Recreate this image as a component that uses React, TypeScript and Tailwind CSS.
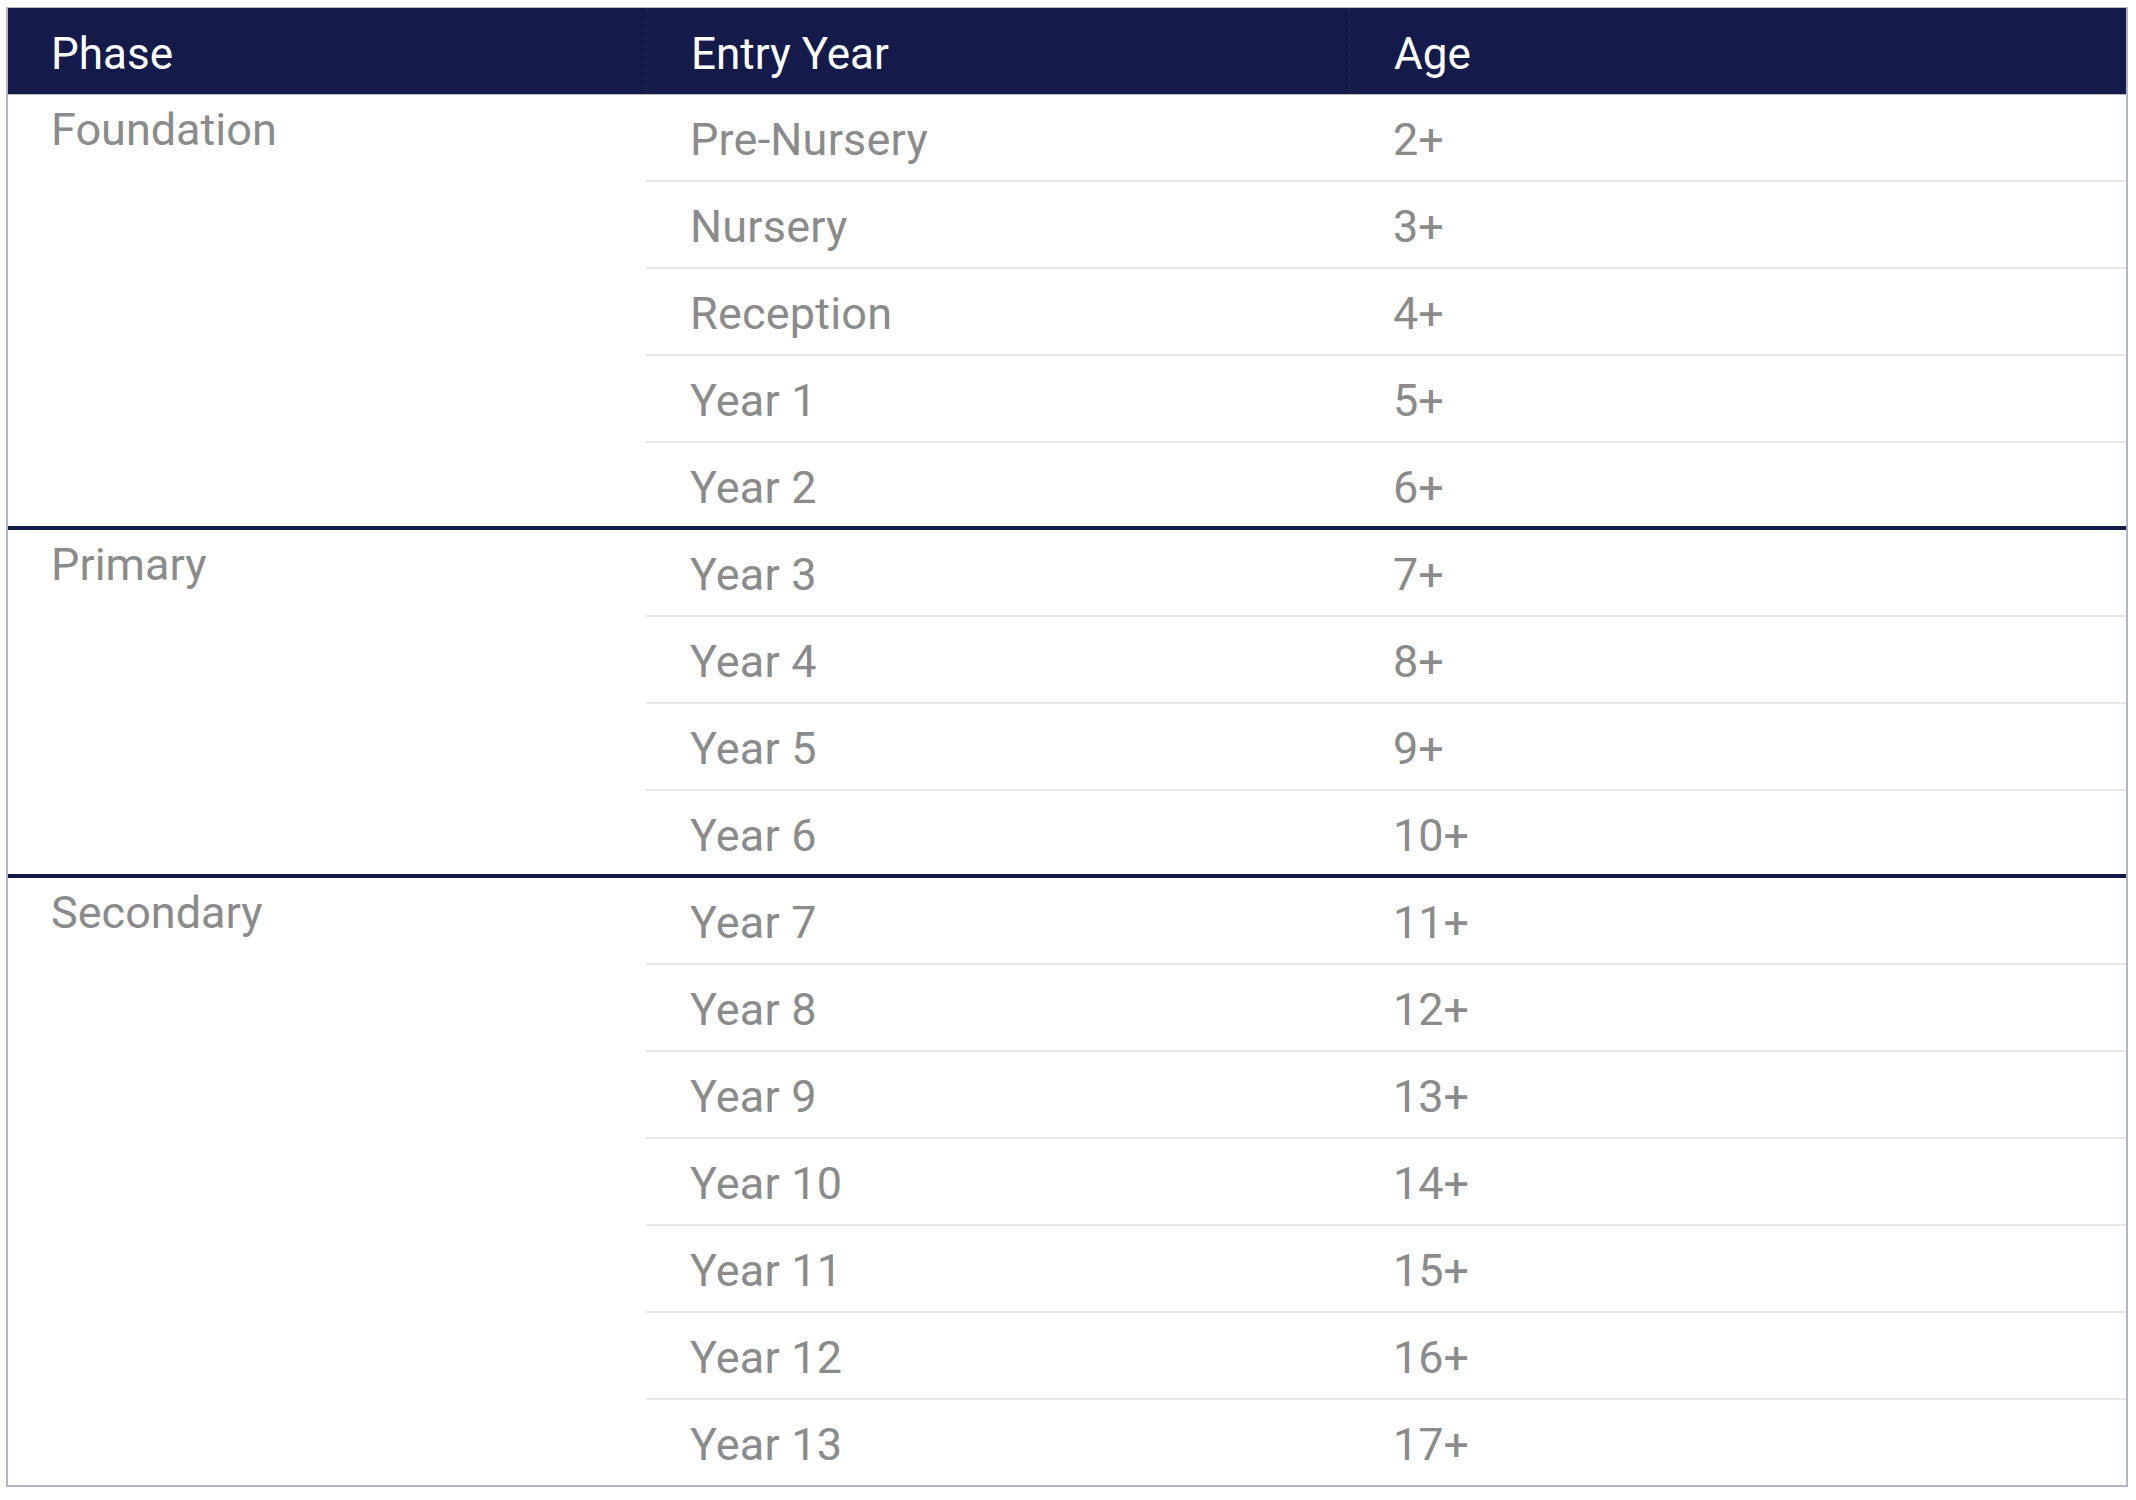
const GROUPS = [
    {
        phase: 'Foundation',
        rows: [
            ['Pre-Nursery', '2+'],
            ['Nursery', '3+'],
            ['Reception', '4+'],
            ['Year 1', '5+'],
            ['Year 2', '6+']
        ]
    },
    {
        phase: 'Primary',
        rows: [
            ['Year 3', '7+'],
            ['Year 4', '8+'],
            ['Year 5', '9+'],
            ['Year 6', '10+']
        ]
    },
    {
        phase: 'Secondary',
        rows: [
            ['Year 7', '11+'],
            ['Year 8', '12+'],
            ['Year 9', '13+'],
            ['Year 10', '14+'],
            ['Year 11', '15+'],
            ['Year 12', '16+'],
            ['Year 13', '17+']
        ]
    }
];

export default function App() {
    return (
        <div className="min-h-screen bg-white pt-[7px] pl-[6px]" style={{ fontFamily: 'Roboto, "Liberation Sans", sans-serif' }}>
            <div className="w-[2122px] border-x-2 border-b-2 border-t border-[#b4b4c8]">
                {/* Header */}
                <div className="grid grid-cols-[638px_703px_1fr] h-[87px] bg-[#141a4a] border-b border-[#b8b8b8] text-white text-[44px] leading-[44px] font-normal">
                    <div className="pl-[43px] pt-[24px]">Phase</div>
                    <div className="pl-[44px] pt-[24px] border-l border-dotted border-[#2c3262]">Entry Year</div>
                    <div className="pl-[44px] pt-[24px] border-l border-dotted border-[#2c3262]">Age</div>
                </div>

                {/* Body */}
                {GROUPS.map((group, gi) => {
                    const lastGroup = gi === GROUPS.length - 1;
                    return (
                        <div
                            key={group.phase}
                            className={`flex text-[45px] leading-[45px] text-[#8b8b8b] ${lastGroup ? '' : 'border-b-4 border-[#141a4a]'}`}
                        >
                            <div className="w-[638px] shrink-0 pl-[43px] pt-[12px]">{group.phase}</div>
                            <div className="flex-1 flex flex-col">
                                {group.rows.map(([year, age], ri) => {
                                    const lastRow = ri === group.rows.length - 1;
                                    return (
                                        <div
                                            key={year}
                                            className={`grid grid-cols-[703px_1fr] ${lastRow ? (lastGroup ? 'h-[85px]' : 'h-[83px]') : 'h-[87px] border-b-2 border-[#e6e6e6]'}`}
                                        >
                                            <div className="pl-[44px] pt-[22px] tracking-[0.2px]">{year}</div>
                                            <div className="pl-[44px] pt-[22px]">{age}</div>
                                        </div>
                                    );
                                })}
                            </div>
                        </div>
                    );
                })}
            </div>
        </div>
    );
}
